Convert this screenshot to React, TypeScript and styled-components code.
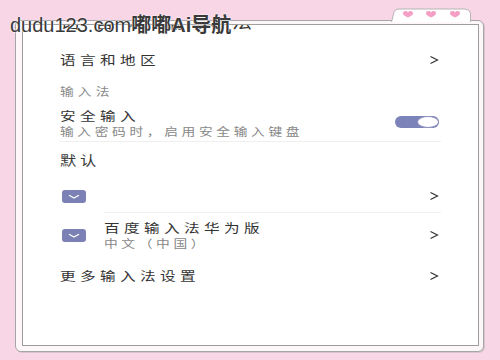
import React from "react";
import styled, { createGlobalStyle } from "styled-components";

const Global = createGlobalStyle`
  html, body { margin: 0; padding: 0; }
  body {
    background: #f9d6e6;
    font-family: "Noto Sans CJK SC", "Noto Sans", sans-serif;
  }
`;

const Page = styled.div`
  position: relative;
  width: 500px;
  height: 360px;
  box-sizing: border-box;
  padding: 20px 16px 8px 15px;
  display: flex;
  overflow: hidden;
`;

const Frame = styled.div`
  position: relative;
  flex: 1;
  box-sizing: border-box;
  border: 1px solid #a6a6a6;
  border-radius: 6px;
  background: #fdf7fa;
  padding: 3px 4px 5px 6px;
  display: flex;
  box-shadow: 1px 1px 0 #d8c4cd;
`;

const Inner = styled.div`
  flex: 1;
  box-sizing: border-box;
  border: 1px solid #9e9e9e;
  background: #ffffff;
  padding: 0 37px 0 37px;
  display: flex;
  flex-direction: column;
`;

/* The screenshot is stretched horizontally; text is widened to match. */
const Stretch = styled.div`
  transform: scaleX(1.25);
  transform-origin: 0 50%;
  white-space: nowrap;
`;

const Title = styled(Stretch)`
  height: 31px;
  margin-top: -16px;
  font-size: 16px;
  line-height: 24px;
  letter-spacing: 11.5px;
  color: #333;
  clip-path: inset(16px 0 0 0);
`;

const MainText = styled(Stretch)`
  font-size: 12.5px;
  line-height: 14px;
  letter-spacing: 3.5px;
  color: #333;
`;

const SubText = styled(Stretch)`
  font-size: 11px;
  line-height: 13px;
  letter-spacing: 2.9px;
  color: #888;
  margin-top: 2px;
`;

const Label = styled(Stretch)<{ $h: number; $dark?: boolean }>`
  height: ${(p) => p.$h}px;
  display: flex;
  align-items: center;
  font-size: ${(p) => (p.$dark ? 13 : 11)}px;
  letter-spacing: ${(p) => (p.$dark ? 3 : 3.3)}px;
  color: ${(p) => (p.$dark ? "#3a3a3a" : "#8a8a8a")};
`;

const Row = styled.div<{ $h: number; $divider?: boolean; $padTop?: number }>`
  height: ${(p) => p.$h}px;
  box-sizing: border-box;
  display: flex;
  align-items: center;
  justify-content: space-between;
  padding-right: 2px;
  padding-top: ${(p) => p.$padTop ?? 0}px;
  border-bottom: ${(p) => (p.$divider ? "1px solid #efefef" : "none")};
`;

const TextBlock = styled.div<{ $top?: boolean }>`
  display: flex;
  flex-direction: column;
  align-self: ${(p) => (p.$top ? "flex-start" : "center")};
`;

const Track = styled.div`
  width: 44px;
  height: 12px;
  border-radius: 6px;
  background: #7c83b8;
  display: flex;
  justify-content: flex-end;
  align-items: center;
  align-self: center;
  margin-top: -7px;
`;

const Thumb = styled.div`
  width: 20px;
  height: 10px;
  border-radius: 50%;
  background: #fff;
  border: 1px solid #8b90bd;
`;

const CheckRow = styled.div<{ $h: number }>`
  height: ${(p) => p.$h}px;
  display: flex;
  align-items: stretch;
`;

const CheckCell = styled.div<{ $padTop?: number }>`
  display: flex;
  align-items: center;
  padding-left: 2px;
  padding-top: ${(p) => p.$padTop ?? 0}px;
`;

const Box = styled.div`
  width: 24px;
  height: 13px;
  border-radius: 3px;
  background: #7b81b4;
  display: flex;
  align-items: center;
  justify-content: center;
`;

const RowBody = styled(Row)`
  flex: 1;
  margin-left: 18px;
`;

const Tab = styled.svg`
  position: absolute;
  right: 10px;
  top: -13px;
`;

const Watermark = styled.div`
  position: absolute;
  left: 10px;
  top: 9px;
  font-family: "Liberation Sans", "Noto Sans CJK SC", sans-serif;
  font-size: 20px;
  color: #3a3a3a;
  text-shadow: 0 0 2px #fff, 0 0 1px #fff;
  white-space: nowrap;
`;

const WatermarkStrong = styled.span`
  font-weight: 700;
`;

const Chevron = () => (
  <svg width="10" height="10" viewBox="0 0 10 10">
    <polyline points="1.5,1.5 8.5,5 1.5,8.5" fill="none" stroke="#333" strokeWidth="1.2" />
  </svg>
);

const Check = () => (
  <svg width="24" height="13" viewBox="0 0 24 13">
    <polyline points="7.5,5.5 12,8 16.5,5.5" fill="none" stroke="#fff" strokeWidth="1.4" strokeLinecap="round" strokeLinejoin="round" />
  </svg>
);

const Heart = ({ x }: { x: number }) => (
  <path
    transform={`translate(${x} 6)`}
    d="M0 -1.5 C-1 -3.5 -5 -3.5 -5 -0.8 C-5 1.2 -2 2.6 0 3.4 C2 2.6 5 1.2 5 -0.8 C5 -3.5 1 -3.5 0 -1.5 Z"
    fill="#f3a0c4"
  />
);

export default function App() {
  return (
    <>
      <Global />
      <Page>
        <Frame>
          <Tab width="82" height="14" viewBox="0 0 82 14">
            <path d="M0.5 14 L3 4 Q4 1 8 1 L74 1 Q78 1 79.5 5 L79.5 14" fill="#fff" stroke="#b5b5b5" strokeWidth="1" />
            <Heart x={17} />
            <Heart x={40} />
            <Heart x={64} />
          </Tab>
          <Inner>
            <Title>语言和输入法</Title>
            <Row $h={40}>
              <MainText>语言和地区</MainText>
              <Chevron />
            </Row>
            <Label $h={22}>输入法</Label>
            <Row $h={40} $divider $padTop={7}>
              <TextBlock $top>
                <MainText>安全输入</MainText>
                <SubText>输入密码时，启用安全输入键盘</SubText>
              </TextBlock>
              <Track>
                <Thumb />
              </Track>
            </Row>
            <Label $h={34} $dark>默认</Label>
            <CheckRow $h={37}>
              <CheckCell $padTop={3}>
                <Box>
                  <Check />
                </Box>
              </CheckCell>
              <RowBody $h={37} $divider $padTop={4}>
                <MainText />
                <Chevron />
              </RowBody>
            </CheckRow>
            <CheckRow $h={44}>
              <CheckCell>
                <Box>
                  <Check />
                </Box>
              </CheckCell>
              <RowBody $h={44}>
                <TextBlock>
                  <MainText>百度输入法华为版</MainText>
                  <SubText>中文（中国）</SubText>
                </TextBlock>
                <Chevron />
              </RowBody>
            </CheckRow>
            <Row $h={38}>
              <MainText>更多输入法设置</MainText>
              <Chevron />
            </Row>
          </Inner>
        </Frame>
        <Watermark>
          dudu123.com<WatermarkStrong>嘟嘟Ai导航</WatermarkStrong>
        </Watermark>
      </Page>
    </>
  );
}
